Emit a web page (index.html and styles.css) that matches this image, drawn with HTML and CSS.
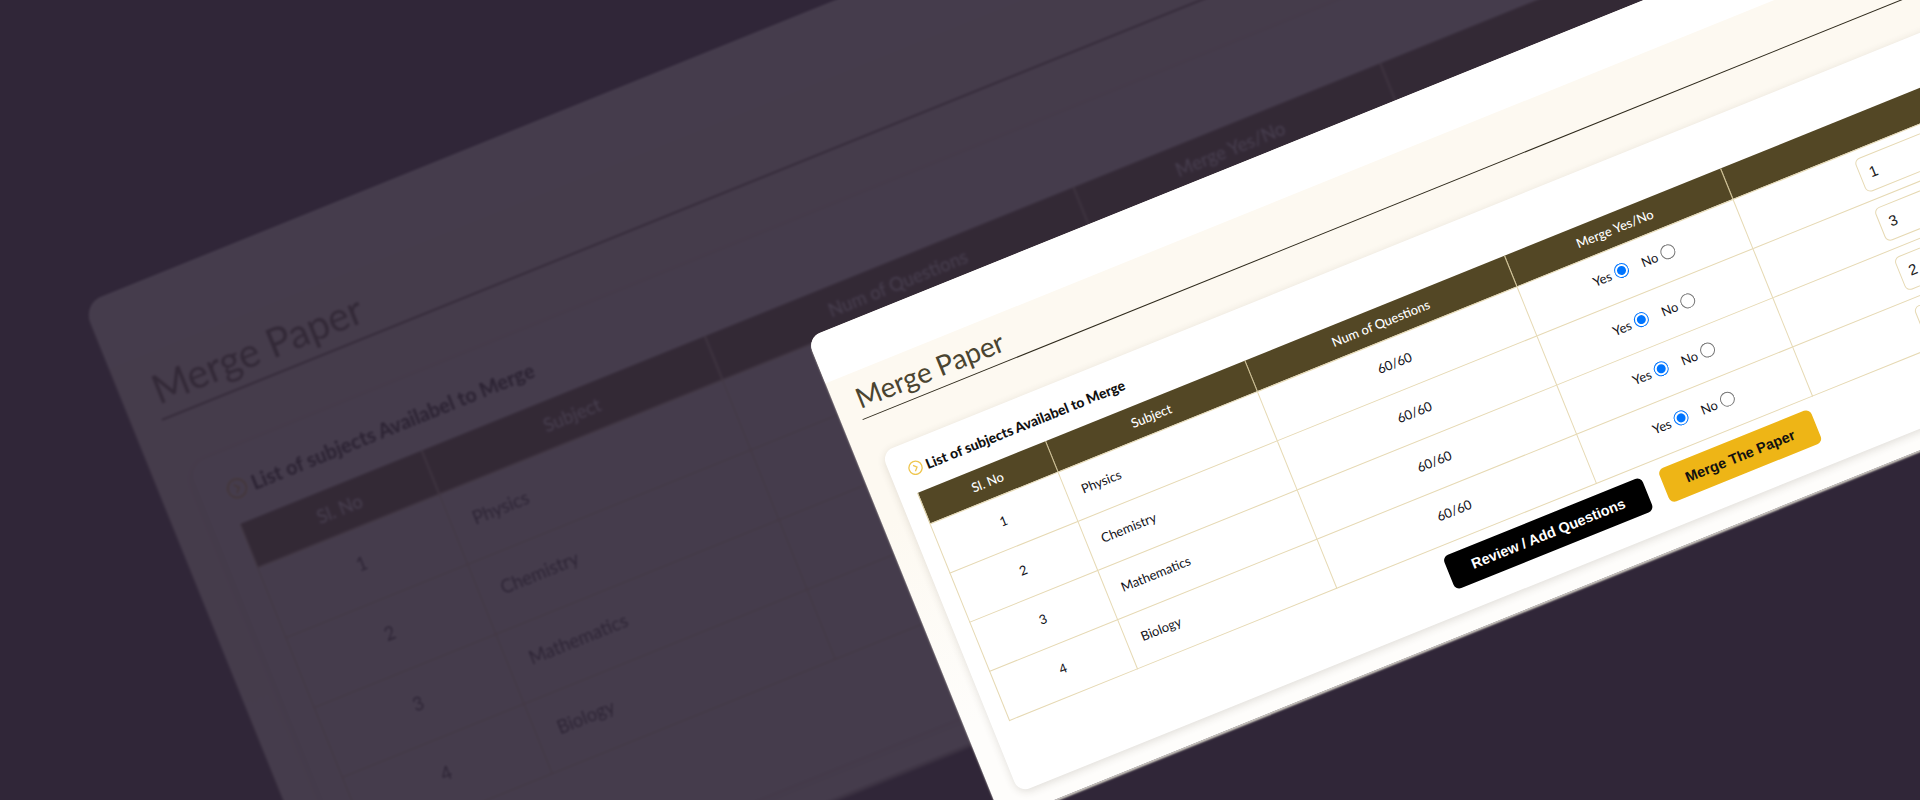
FILE: index.html
```html
<!DOCTYPE html>
<html lang="en">
<head>
    <meta charset="UTF-8">
    <meta name="viewport" content="width=device-width, initial-scale=1.0">
    <title>Merge Paper</title>
    <link rel="stylesheet" href="styles.css">
</head>
<body>
<div class="scene">

  <!-- faded copy behind -->
  <div class="card card-back">
    <div class="card-bar"></div>
    <h1 class="card-title">Merge Paper</h1>
    <div class="panel">
      <div class="panel-head">
        <svg class="panel-icon" viewBox="0 0 16 16"><circle cx="8" cy="8" r="6.6"/><path d="M6.6 4.8 9.6 8 6.6 11.2"/></svg>
        <span>List of subjects Availabel to Merge</span>
      </div>
      <table class="subjects">
        <thead>
          <tr><th class="col-no">Sl. No</th><th class="col-subject">Subject</th><th class="col-num">Num of Questions</th><th class="col-merge">Merge Yes/No</th><th class="col-order"></th></tr>
        </thead>
        <tbody>
          <tr><td>1</td><td class="left">Physics</td><td class="count">60/60</td><td class="merge"><label>Yes <input type="radio" name="b1" checked></label><label>No <input type="radio" name="b1"></label></td><td class="order"><input type="text" value="1"></td></tr>
          <tr><td>2</td><td class="left">Chemistry</td><td class="count">60/60</td><td class="merge"><label>Yes <input type="radio" name="b2" checked></label><label>No <input type="radio" name="b2"></label></td><td class="order"><input type="text" value="3"></td></tr>
          <tr><td>3</td><td class="left">Mathematics</td><td class="count">60/60</td><td class="merge"><label>Yes <input type="radio" name="b3" checked></label><label>No <input type="radio" name="b3"></label></td><td class="order"><input type="text" value="2"></td></tr>
          <tr><td>4</td><td class="left">Biology</td><td class="count">60/60</td><td class="merge"><label>Yes <input type="radio" name="b4" checked></label><label>No <input type="radio" name="b4"></label></td><td class="order"><input type="text" value="4"></td></tr>
        </tbody>
      </table>
      <div class="actions">
        <button class="btn btn-review">Review / Add Questions</button>
        <button class="btn btn-merge">Merge The Paper</button>
      </div>
    </div>
  </div>

  <div class="card card-front">
    <div class="card-bar"></div>
    <h1 class="card-title">Merge Paper</h1>
    <div class="panel">
      <div class="panel-head">
        <svg class="panel-icon" viewBox="0 0 16 16"><circle cx="8" cy="8" r="6.6"/><path d="M6.6 4.8 9.6 8 6.6 11.2"/></svg>
        <span>List of subjects Availabel to Merge</span>
      </div>
      <table class="subjects">
        <thead>
          <tr><th class="col-no">Sl. No</th><th class="col-subject">Subject</th><th class="col-num">Num of Questions</th><th class="col-merge">Merge Yes/No</th><th class="col-order"></th></tr>
        </thead>
        <tbody>
          <tr><td>1</td><td class="left">Physics</td><td class="count">60/60</td><td class="merge"><label>Yes <input type="radio" name="f1" checked></label><label>No <input type="radio" name="f1"></label></td><td class="order"><input type="text" value="1"></td></tr>
          <tr><td>2</td><td class="left">Chemistry</td><td class="count">60/60</td><td class="merge"><label>Yes <input type="radio" name="f2" checked></label><label>No <input type="radio" name="f2"></label></td><td class="order"><input type="text" value="3"></td></tr>
          <tr><td>3</td><td class="left">Mathematics</td><td class="count">60/60</td><td class="merge"><label>Yes <input type="radio" name="f3" checked></label><label>No <input type="radio" name="f3"></label></td><td class="order"><input type="text" value="2"></td></tr>
          <tr><td>4</td><td class="left">Biology</td><td class="count">60/60</td><td class="merge"><label>Yes <input type="radio" name="f4" checked></label><label>No <input type="radio" name="f4"></label></td><td class="order"><input type="text" value="4"></td></tr>
        </tbody>
      </table>
      <div class="actions">
        <button class="btn btn-review">Review / Add Questions</button>
        <button class="btn btn-merge">Merge The Paper</button>
      </div>
    </div>
  </div>

</div>
</body>
</html>
```

FILE: styles.css
```css
body {
    margin: 0;
    background: #302638;
    font-family: "Lato", "Open Sans", sans-serif;
}
.scene {
    position: relative;
    width: 1920px;
    height: 800px;
    overflow: hidden;
    background: #302638;
}

/* both cards sit tilted on the canvas */
.card {
    position: absolute;
    width: 1400px;
    height: 521px;
    transform-origin: 0 0;
    border-radius: 14px;
    background: linear-gradient(to bottom, #fdf9f1 0, #fdf9f1 200px, #fefdfb 420px);
    box-shadow: 0 2px 2px #cfcbc2;
    overflow: hidden;
}
.card-front {
    left: 807px;
    top: 338px;
    transform: rotate(-22deg);
}
.card-back {
    left: 83px;
    top: 304px;
    transform: rotate(-22deg) scale(1.42);
    opacity: .1;
    filter: blur(.6px);
}

.card-bar {
    height: 49px;
    background: #fff;
}
.card-title {
    box-sizing: border-box;
    height: 48px;
    margin: 0 0 37px 21px;
    padding: 5px 0 0 2px;
    font-size: 28px;
    font-weight: 400;
    line-height: 42px;
    color: #4a4430;
    border-bottom: 1px solid #2f2a1c;
}

.panel {
    box-sizing: border-box;
    height: 367px;
    margin-left: 26px;
    padding: 0 18px;
    background: #fff;
    border-radius: 12px;
    box-shadow: 0 2px 8px rgba(60, 50, 30, .16);
}
.panel-head {
    display: flex;
    align-items: center;
    gap: 3px;
    height: 51px;
    padding-top: 3px;
    box-sizing: border-box;
    font-size: 14px;
    font-weight: 900;
    color: #111;
}
.panel-icon {
    width: 16px;
    height: 16px;
    fill: none;
    stroke: #efc64f;
    stroke-width: 1.3;
}

.subjects {
    table-layout: fixed;
    width: 1270px;
    border-collapse: collapse;
    font-size: 13px;
    color: #111118;
}
.subjects th {
    box-sizing: border-box;
    height: 33px;
    padding: 0;
    background: #534725;
    color: #fff;
    font-weight: 500;
    font-size: 13px;
    border: 1px solid #d9cb9d;
    border-top: 0;
    border-bottom: 0;
}
.subjects td {
    box-sizing: border-box;
    height: 53px;
    padding: 0 0 4px;
    text-align: center;
    border: 1px solid #e6d9b3;
}
.subjects td.left {
    padding-left: 15px;
    text-align: left;
}
.subjects td.count {
    padding-right: 4px;
}
.subjects th.col-merge {
    padding-right: 8px;
}
.col-no { width: 138px; }
.col-subject { width: 215px; }
.col-num { width: 280px; }
.col-merge { width: 233px; }

.subjects label {
    display: inline-flex;
    align-items: center;
    gap: 4px;
    margin: 0 7px;
    font-size: 13px;
}
.subjects input[type="radio"] {
    width: 15px;
    height: 15px;
    margin: 0;
}
.subjects td.order {
    padding: 0 0 0 126px;
    text-align: left;
}
.order input {
    box-sizing: border-box;
    width: 150px;
    height: 36px;
    padding: 0 9px;
    border: 1px solid #e6d9b3;
    border-radius: 6px;
    font: 15px "Liberation Sans", sans-serif;
    color: #222;
    vertical-align: middle;
}

.actions {
    display: flex;
    justify-content: flex-end;
    gap: 18px;
    width: 859px;
    margin-top: 10px;
}
.btn {
    height: 36px;
    border: 0;
    border-radius: 6px;
    font: bold 14.5px "Liberation Sans", Arial, sans-serif;
}
.btn-review {
    width: 214px;
    background: #000;
    color: #fff;
}
.btn-merge {
    width: 164px;
    background: #eeb516;
    color: #111;
}
```
